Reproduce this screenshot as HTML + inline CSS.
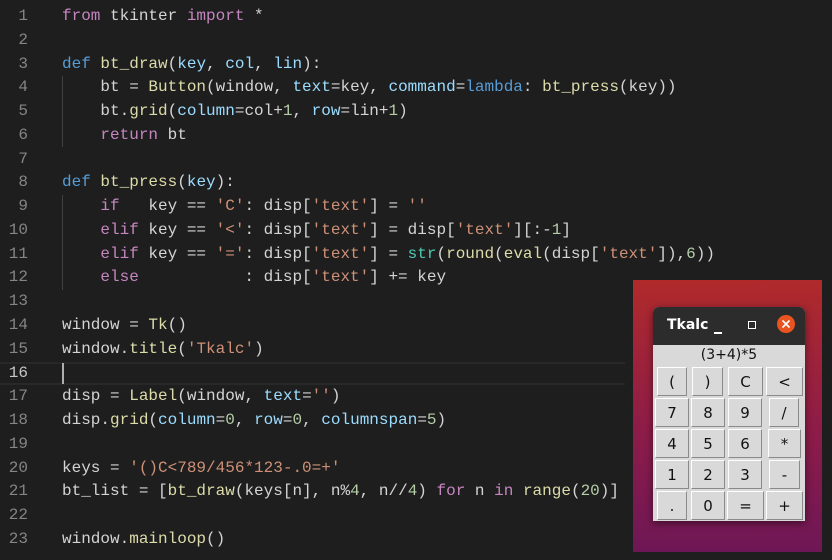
<!DOCTYPE html><html><head><style>
body{margin:0;width:832px;height:560px;background:#1e1e1e;overflow:hidden;position:relative;font-family:"Liberation Mono",monospace}
.ln{position:absolute;left:0;width:28px;text-align:right;color:#858585;font-size:16px}
.c{position:absolute;left:62px;white-space:pre;color:#d4d4d4;font-size:16px}
.k{color:#c586c0}.d{color:#569cd6}.f{color:#dcdcaa}.v{color:#9cdcfe}.s{color:#ce9178}.n{color:#b5cea8}.t{color:#4ec9b0}
.g{position:absolute;left:62px;width:1px;background:#404040}
.b{position:absolute;background:#d9d9d9;border-top:1px solid #fff;border-left:1px solid #fff;border-right:1px solid #8a8a8a;border-bottom:1px solid #8a8a8a;box-sizing:border-box;font:15px "DejaVu Sans",sans-serif;color:#111;display:flex;align-items:center;justify-content:center}
</style></head><body>
<div style="position:absolute;left:0;top:362px;width:625px;height:23px;border-top:2px solid #282828;border-bottom:2px solid #282828;box-sizing:border-box"></div>
<div style="position:absolute;left:62px;top:363px;width:2px;height:21px;background:#aeafad"></div>
<div class="g" style="top:76px;height:71px"></div>
<div class="g" style="top:195px;height:95px"></div>
<div id="code"></div>
<script>
var L=[
'<span class="k">from</span> tkinter <span class="k">import</span> *',
'',
'<span class="d">def</span> <span class="f">bt_draw</span>(<span class="v">key</span>, <span class="v">col</span>, <span class="v">lin</span>):',
'    bt = <span class="f">Button</span>(window, <span class="v">text</span>=key, <span class="v">command</span>=<span class="d">lambda</span>: <span class="f">bt_press</span>(key))',
'    bt.<span class="f">grid</span>(<span class="v">column</span>=col+<span class="n">1</span>, <span class="v">row</span>=lin+<span class="n">1</span>)',
'    <span class="k">return</span> bt',
'',
'<span class="d">def</span> <span class="f">bt_press</span>(<span class="v">key</span>):',
'    <span class="k">if</span>   key == <span class="s">\'C\'</span>: disp[<span class="s">\'text\'</span>] = <span class="s">\'\'</span>',
'    <span class="k">elif</span> key == <span class="s">\'&lt;\'</span>: disp[<span class="s">\'text\'</span>] = disp[<span class="s">\'text\'</span>][:-<span class="n">1</span>]',
'    <span class="k">elif</span> key == <span class="s">\'=\'</span>: disp[<span class="s">\'text\'</span>] = <span class="t">str</span>(<span class="f">round</span>(<span class="f">eval</span>(disp[<span class="s">\'text\'</span>]),<span class="n">6</span>))',
'    <span class="k">else</span>           : disp[<span class="s">\'text\'</span>] += key',
'',
'window = <span class="f">Tk</span>()',
'window.<span class="f">title</span>(<span class="s">\'Tkalc\'</span>)',
'',
'disp = <span class="f">Label</span>(window, <span class="v">text</span>=<span class="s">\'\'</span>)',
'disp.<span class="f">grid</span>(<span class="v">column</span>=<span class="n">0</span>, <span class="v">row</span>=<span class="n">0</span>, <span class="v">columnspan</span>=<span class="n">5</span>)',
'',
'keys = <span class="s">\'()C&lt;789/456*123-.0=+\'</span>',
'bt_list = [<span class="f">bt_draw</span>(keys[n], n%<span class="n">4</span>, n//<span class="n">4</span>) <span class="k">for</span> n <span class="k">in</span> <span class="f">range</span>(<span class="n">20</span>)]',
'',
'window.<span class="f">mainloop</span>()'];
var h='';for(var i=0;i<L.length;i++){var y=17+i*23.77-10;
h+='<div class="ln" style="top:'+(y)+'px;'+(i==15?'color:#c6c6c6':'')+'">'+(i+1)+'</div><div class="c" style="top:'+(y)+'px">'+L[i]+'</div>';}
document.getElementById('code').innerHTML=h;
</script>
<div style="position:absolute;left:633px;top:280px;width:189px;height:272px;background:linear-gradient(#b02a2b,#8e1c48 55%,#6e1756)"></div>
<div style="position:absolute;left:653px;top:307px;width:152px;height:214px;background:#d9d9d9;border-radius:6px 6px 0 0;overflow:hidden;box-shadow:0 2px 8px rgba(0,0,0,.5)">
<div style="height:38px;background:#2c2c2c;position:relative;color:#fff;font:bold 14px 'DejaVu Sans',sans-serif">
<span style="position:absolute;left:14px;top:10px">Tkalc</span>
<span style="position:absolute;left:61px;top:25px;width:8px;height:1.5px;background:#fff"></span>
<span style="position:absolute;left:95px;top:14px;width:6px;height:6px;border:1.5px solid #fff"></span>
<span style="position:absolute;left:124px;top:8px;width:18px;height:18px;border-radius:50%;background:#e95420"></span>
<svg style="position:absolute;left:124px;top:8px" width="18" height="18"><path d="M5.5 5.5L12.5 12.5M12.5 5.5L5.5 12.5" stroke="#fff" stroke-width="1.6"/></svg>
</div>
<div style="text-align:center;font:14px 'DejaVu Sans',sans-serif;color:#111;margin-top:2px">(3+4)*5</div>
</div>
<div class="b" style="left:657px;top:367px;width:30px;height:29px">(</div>
<div class="b" style="left:692px;top:367px;width:31px;height:29px">)</div>
<div class="b" style="left:728px;top:367px;width:35px;height:29px">C</div>
<div class="b" style="left:766px;top:367px;width:37px;height:29px">&lt;</div>
<div class="b" style="left:655px;top:398px;width:34px;height:29px">7</div>
<div class="b" style="left:691px;top:398px;width:34px;height:29px">8</div>
<div class="b" style="left:728px;top:398px;width:34px;height:29px">9</div>
<div class="b" style="left:769px;top:398px;width:30px;height:29px">/</div>
<div class="b" style="left:655px;top:429px;width:34px;height:29px">4</div>
<div class="b" style="left:691px;top:429px;width:34px;height:29px">5</div>
<div class="b" style="left:728px;top:429px;width:34px;height:29px">6</div>
<div class="b" style="left:768px;top:429px;width:33px;height:29px">*</div>
<div class="b" style="left:655px;top:460px;width:34px;height:29px">1</div>
<div class="b" style="left:691px;top:460px;width:34px;height:29px">2</div>
<div class="b" style="left:728px;top:460px;width:34px;height:29px">3</div>
<div class="b" style="left:769px;top:460px;width:31px;height:29px">-</div>
<div class="b" style="left:657px;top:491px;width:30px;height:29px">.</div>
<div class="b" style="left:691px;top:491px;width:34px;height:29px">0</div>
<div class="b" style="left:727px;top:491px;width:37px;height:29px">=</div>
<div class="b" style="left:766px;top:491px;width:37px;height:29px">+</div>
</body></html>
